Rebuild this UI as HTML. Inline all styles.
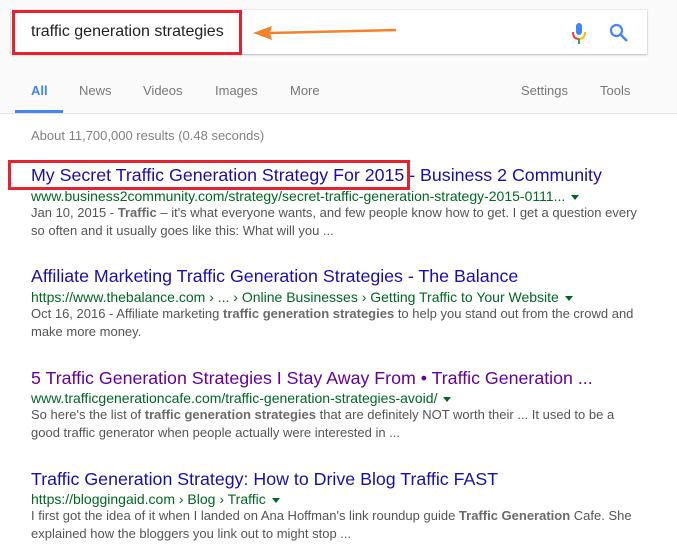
<!DOCTYPE html>
<html><head><style>
body{margin:0;width:677px;height:560px;background:#fff;font-family:"Liberation Sans",Arial,sans-serif;position:relative;overflow:hidden}
.hdr{position:absolute;left:0;top:0;width:677px;height:113px;background:#fafafa;border-bottom:1px solid #e4e4e4}
.sb{position:absolute;left:11px;top:10px;width:636px;height:44px;background:#fff;box-shadow:0 1px 2px rgba(0,0,0,.2),0 0 0 1px rgba(0,0,0,.06)}
.q{position:absolute;left:31px;top:23px;font-size:16px;color:#222}
.red{position:absolute;border:3px solid #e8212f;box-sizing:border-box}
.tab{position:absolute;top:83px;font-size:13px;color:#777}
.a{position:absolute;left:31px;white-space:nowrap}
.t{font-size:17.8px;color:#1a0dab}
.u{font-size:14px;color:#006621}
.s{font-size:13px;color:#545454;line-height:18px}
.s b{color:#6a6a6a}
.tri{display:inline-block;border-left:4px solid transparent;border-right:4px solid transparent;border-top:5px solid #006621;margin-left:6px;vertical-align:middle}
</style></head><body>
<div class="hdr"></div>
<div class="sb"></div>
<div class="q">traffic generation strategies</div>
<div class="red" style="left:12px;top:10px;width:230px;height:45px"></div>
<svg style="position:absolute;left:250px;top:22px" width="150" height="20"><path d="M146 8 L20 11" stroke="#f5822a" stroke-width="2.5" fill="none"/><path d="M3 11 L22 4 L20 11 L22 18 Z" fill="#f5822a"/></svg>
<svg style="position:absolute;left:570px;top:22px" width="18" height="24" viewBox="0 0 18 24"><rect x="6" y="1" width="6" height="12" rx="3" fill="#4285f4"/><path d="M3 10 Q3 17 9 17" stroke="#ea4335" stroke-width="2" fill="none"/><path d="M15 10 Q15 17 9 17" stroke="#fbbc05" stroke-width="2" fill="none"/><rect x="8" y="17" width="2" height="5" fill="#34a853"/></svg>
<svg style="position:absolute;left:609px;top:23px" width="20" height="20" viewBox="0 0 20 20"><circle cx="7.5" cy="7.5" r="5.5" stroke="#4285f4" stroke-width="2.2" fill="none"/><path d="M11.5 11.5 L18 18" stroke="#4285f4" stroke-width="2.6"/></svg>
<div class="tab" style="left:31px;color:#4285f4;font-weight:bold">All</div>
<div style="position:absolute;left:15px;top:110px;width:48px;height:3px;background:#4285f4"></div>
<div class="tab" style="left:79px">News</div>
<div class="tab" style="left:143px">Videos</div>
<div class="tab" style="left:215px">Images</div>
<div class="tab" style="left:290px">More</div>
<div class="tab" style="left:521px">Settings</div>
<div class="tab" style="left:600px">Tools</div>
<div class="a" style="top:128px;font-size:13px;color:#808080">About 11,700,000 results (0.48 seconds)</div>

<div class="a t" style="top:165px">My Secret Traffic Generation Strategy For 2015 - Business 2 Community</div>
<div class="red" style="left:8px;top:160px;width:402px;height:30px"></div>
<div class="a u" style="top:188px">www.business2community.com/strategy/secret-traffic-generation-strategy-2015-0111...<span class="tri"></span></div>
<div class="a s" style="top:204px">Jan 10, 2015 - <b>Traffic</b> – it's what everyone wants, and few people know how to get. I get a question every<br>so often and it usually goes like this: What will you ...</div>

<div class="a t" style="top:266px">Affiliate Marketing Traffic Generation Strategies - The Balance</div>
<div class="a u" style="top:289px">https://www.thebalance.com › ... › Online Businesses › Getting Traffic to Your Website<span class="tri"></span></div>
<div class="a s" style="top:305px">Oct 16, 2016 - Affiliate marketing <b>traffic generation strategies</b> to help you stand out from the crowd and<br>make more money.</div>

<div class="a t" style="top:368px;color:#660099">5 Traffic Generation Strategies I Stay Away From • Traffic Generation ...</div>
<div class="a u" style="top:390px">www.trafficgenerationcafe.com/traffic-generation-strategies-avoid/<span class="tri"></span></div>
<div class="a s" style="top:406px">So here's the list of <b>traffic generation strategies</b> that are definitely NOT worth their ... It used to be a<br>good traffic generator when people actually were interested in ...</div>

<div class="a t" style="top:469px">Traffic Generation Strategy: How to Drive Blog Traffic FAST</div>
<div class="a u" style="top:491px">https://bloggingaid.com › Blog › Traffic<span class="tri"></span></div>
<div class="a s" style="top:507px">I first got the idea of it when I landed on Ana Hoffman's link roundup guide <b>Traffic Generation</b> Cafe. She<br>explained how the bloggers you link out to might stop ...</div>
</body></html>
